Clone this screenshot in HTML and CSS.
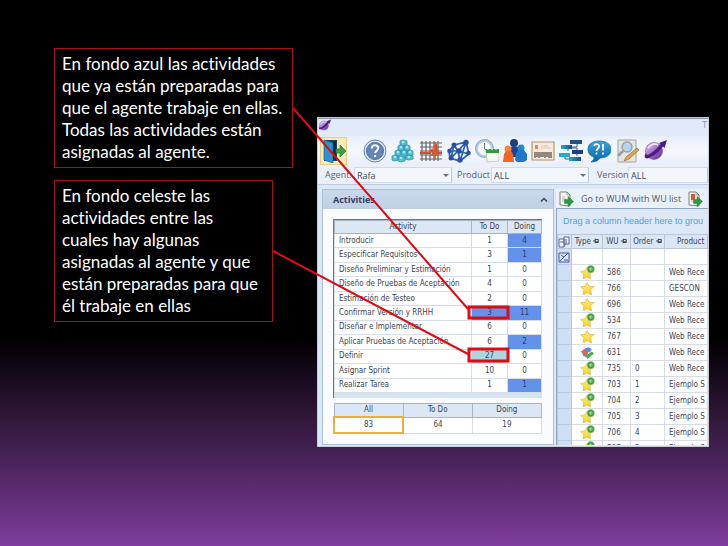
FILE: index.html
```html
<!DOCTYPE html>
<html lang="es">
<head>
<meta charset="utf-8">
<meta name="viewport" content="width=device-width, initial-scale=1">
<title>Actividades del agente</title>
<link rel="stylesheet" href="styles.css">
</head>
<body>
<svg class="defs" aria-hidden="true">
  <defs>
    <linearGradient id="gold" x1="0" y1="0" x2="0" y2="1"><stop offset="0" stop-color="#fff27a"/><stop offset="1" stop-color="#f5cf2c"/></linearGradient>
    <linearGradient id="violet" x1="0" y1="0" x2="1" y2="1"><stop offset="0" stop-color="#e6d4f2"/><stop offset=".5" stop-color="#a070c8"/><stop offset="1" stop-color="#54208a"/></linearGradient>
    <linearGradient id="sea" x1="0" y1="0" x2="0" y2="1"><stop offset="0" stop-color="#38a6da"/><stop offset="1" stop-color="#0a62a4"/></linearGradient>
    <linearGradient id="teal" x1="0" y1="0" x2="1" y2="0"><stop offset="0" stop-color="#1cb4c8"/><stop offset="1" stop-color="#1c4494"/></linearGradient>
  </defs>
  <symbol id="star" viewBox="0 0 14 14"><path d="M6 1.500l1.600 3.400 4.600.3-3.100 3 .9 4.600L6 10.900l-3.600 1.900.5-4.500L0 5.400l4.300-.5z" fill="url(#gold)" stroke="#e6bc3a" stroke-width=".8" transform="translate(.8 0)"/></symbol>
  <symbol id="star-plus" viewBox="0 0 14 14"><use href="#star" width="13" height="13" y="1"/><circle cx="10" cy="3.800" r="3.400" fill="#3f9c35" stroke="#8fcc80" stroke-width=".5"/><path d="M10 2v3.600M8.200 3.800h3.600" stroke="#a8dc9c" stroke-width="1"/></symbol>
  <symbol id="gem" viewBox="0 0 14 14"><path d="M1 6l4-3 3 2-1 4-3 1z" fill="#e2604c"/><path d="M5 3l3-1 3 2-2 3-3-1z" fill="#5c8ede"/><path d="M2 7l3 1 2 4-4-2z" fill="#7c7ed0"/><path d="M5 9l2 4 6-5-2-2-4 3z" fill="#46ac4e"/></symbol>
  <symbol id="planet" viewBox="0 0 24 24"><circle cx="11" cy="12" r="8.500" fill="url(#violet)" stroke="#7a4ca8" stroke-width=".6"/><path d="M3.500 13C0 18 2 21 7 18.500c6-3 10-7 13-11l1.500 1.500L24 1l-8 3 1.500 1.300C13 10.500 9 14.500 5 15.800 3 16.200 2.800 15 3.500 13z" fill="#4d1c82"/><path d="M5 9q5-6 10-3" stroke="#f3e9fa" stroke-width="1.500" fill="none"/></symbol>
  <symbol id="doc-go" viewBox="0 0 16 16"><path d="M2 1h7l3 3v11l-10-1z" fill="#fafbf8" stroke="#7b8074"/><path d="M9 1v3h3" fill="none" stroke="#7b8074" stroke-width=".7"/><path d="M4 6h3M4 8h4M4 10h3" stroke="#a3a89e" stroke-width=".8"/><path d="M6.500 8.500H10V5.500l5.500 5-5.500 5v-3H6.500z" fill="#2b9a43" stroke="#1c7630" stroke-width=".5"/></symbol>
  <symbol id="pin" viewBox="0 0 8 8"><path d="M0 4h3M3 1v6M3 2h4v4H3M3 5h4" fill="none" stroke="#333845" stroke-width="1.200"/></symbol>
</svg>

<main class="slide">
  <div class="notes">
    <p class="note">En fondo azul las actividades<br>que ya están preparadas para<br>que el agente trabaje en ellas.<br>Todas las actividades están<br>asignadas al agente.</p>
    <p class="note note-short">En fondo celeste las<br>actividades entre las<br>cuales hay algunas<br>asignadas al agente y que<br>están preparadas para que<br>él trabaje en ellas</p>
  </div>

  <section class="window" aria-label="Agent">
    <header class="titlebar">
      <svg class="app-icon"><use href="#planet"/></svg>
      <span>T</span>
    </header>

    <nav class="toolbar">
      <button class="tool tool-exit" aria-label="Exit"><svg viewBox="0 0 24 24"><path d="M2 1h13v21H2z" fill="#12435f"/><path d="M2 1l9 3v20l-9-3z" fill="#2b94cc" stroke="#0d628f" stroke-width=".7"/><path d="M11 2h3v19h-3z" fill="#0b2c42"/><path d="M14 10h4V6l6 6-6 6v-4h-4z" fill="#37a24b" stroke="#1e7a36" stroke-width=".7"/></svg></button>
      <button class="tool" aria-label="Help"><svg viewBox="0 0 24 24"><circle cx="12" cy="12" r="11" fill="#dce5f0" stroke="#6784ad"/><circle cx="12" cy="12" r="8.500" fill="#6387b8" stroke="#4e70a0"/><path d="M8.800 9.500c0-4.500 6.700-4.300 6.500-.3-.1 2.200-3.100 2.300-3.100 4.800M12.100 16v2" fill="none" stroke="#fff" stroke-width="2"/></svg></button>
      <button class="tool" aria-label="Packages"><svg viewBox="0 0 24 24"><g fill="#55bfd2" stroke="#2f93ac" stroke-width=".8"><path d="M9 2l3-1 4 1v4l-4 1-3-1zM7 7l3-1 3 1v4l-3 1-3-1zM13 7l3-1 3 1v4l-3 1-3-1zM4 12l3-1 3 1v4l-3 1-3-1zM10 12l3-1 3 1v4l-3 1-3-1zM16 12l3-1 3 1v4l-3 1-3-1zM1 17l3-1 3 1v4l-3 1-3-1zM7 18l3-1 4 1v4l-4 1-3-1zM14 17l4-1 4 1v3l-4 1-4-1z"/></g><g fill="#a5e6ef"><circle cx="12" cy="3" r="1.300"/><circle cx="10" cy="8" r="1.300"/><circle cx="16" cy="8" r="1.300"/><circle cx="7" cy="13" r="1.300"/><circle cx="13" cy="13" r="1.300"/><circle cx="19" cy="13" r="1.300"/><circle cx="4" cy="18" r="1.300"/><circle cx="10" cy="19" r="1.300"/><circle cx="18" cy="18" r="1.300"/></g></svg></button>
      <button class="tool" aria-label="Plan"><svg viewBox="0 0 24 24"><path d="M3 2v20M7 2v20M11 2v20M15 2v20M19 2v20M1 4h22M1 8h22M1 12h22M1 16h22M1 20h22" stroke="#6b6262" stroke-width="1.200"/><path d="M1 14h10l2-3 2 6 2-12 1 9h5" stroke="#d1512b" stroke-width="2" fill="none"/><path d="M16 3v18M12 16h8" stroke="#cf5c37" stroke-width="1.500"/></svg></button>
      <button class="tool" aria-label="Network"><svg viewBox="0 0 24 24"><path d="M7 6l12-3 3 12-9 7-10-3-1-7zM7 6l4 6 8-9M2 12h9l11 3M4 19l7-7 2 10M7 6L4 19M19 3l-6 19" fill="none" stroke="#2f5fb2" stroke-width="1.700"/><g fill="#2551aa"><circle cx="7" cy="6" r="2.500"/><circle cx="19" cy="3.500" r="2.700"/><circle cx="21.500" cy="14" r="2.300"/><circle cx="13" cy="21" r="2.700"/><circle cx="4" cy="19" r="2.500"/><circle cx="2.500" cy="12" r="2.300"/><circle cx="12" cy="12" r="2.700"/></g></svg></button>
      <button class="tool" aria-label="Schedule"><svg viewBox="0 0 24 24"><circle cx="9.500" cy="9.500" r="9" fill="#b4cce8" stroke="#8ca7c8"/><circle cx="9.500" cy="9.500" r="6.500" fill="#f8fbff"/><path d="M9.500 4v6l5 2" stroke="#62758c" fill="none"/><path d="M11 11h13v11l-12 1z" fill="#f5f8f2" stroke="#b0bdab" stroke-width=".7"/><path d="M11 10h13v4H11z" fill="#2f993c"/><path d="M13 9v2M17 9v2M21 9v2" stroke="#e6f3e5" stroke-width="1.200"/></svg></button>
      <button class="tool" aria-label="Team"><svg viewBox="0 0 24 24"><circle cx="11" cy="4" r="4" fill="#1a3f87"/><path d="M6 18V9l4-2 6 1 2 3v7z" fill="#1b458f"/><circle cx="18" cy="9" r="3.500" fill="#2587d3"/><path d="M12 21l1-7 3-3h5l3 4v6l-3 2h-7z" fill="#1c78c8"/><circle cx="5" cy="10" r="3.500" fill="#f4863c"/><path d="M0 23l1-8 2-3h5l2 3 1 8z" fill="#ee6822"/></svg></button>
      <button class="tool" aria-label="Card"><svg viewBox="0 0 24 24"><path d="M1 3h22v18H1z" fill="#f7eadc" stroke="#b49674" stroke-width="1.200"/><path d="M4 6h3v4H4z" fill="#ef8b32"/><path d="M10 7h7M10 9h10" stroke="#d8c6b5"/><path d="M4 13v6M6 13v5M8 13v6M10 13v5M12 13v5M14 13v6M16 13v5M18 13v6M20 13v6" stroke="#4f4742" stroke-width="1.200"/></svg></button>
      <button class="tool" aria-label="Workflow"><svg viewBox="0 0 24 24"><path d="M18 4v4H9v4M9 9h9v8M6 14v6h8" fill="none" stroke="#386598"/><path d="M11 1h12v4H11z" fill="#22508f"/><path d="M2 6h11v4H2z" fill="url(#teal)"/><path d="M13 11h11v4H13z" fill="#203b87"/><path d="M0 14h11v4H0z" fill="#21b0c7"/><path d="M10 18h12v4H10z" fill="url(#teal)"/></svg></button>
      <button class="tool" aria-label="Questions"><svg viewBox="0 0 24 24"><path d="M12 2c7 0 12 3 12 8.500S19 19 13 19c-2 3-5 4-9 4 2-1 3-3 3-5-4-1-6-4-6-8C1 5 6 2 12 2z" fill="url(#sea)" stroke="#0e639b" stroke-width=".7"/><path d="M7 7c1-3 6-2 5 1-.5 1.500-2.500 2-2.500 4M9.500 13.500v2M16 5v6.500M16 13.500v2" fill="none" stroke="#fff" stroke-width="1.700"/></svg></button>
      <button class="tool" aria-label="Review"><svg viewBox="0 0 24 24"><path d="M3 1h18v22H3z" fill="#e6e5e1" stroke="#a3a29f"/><circle cx="12" cy="8" r="5" fill="#b9d4ec" stroke="#95a3b4" stroke-width="1.500"/><path d="M8 12l-5 5" stroke="#929cab" stroke-width="2.500"/><path d="M22 9l2 2-10 9-5 2 2-4z" fill="#dca553" stroke="#97713e" stroke-width=".7"/></svg></button>
      <button class="tool" aria-label="Explore"><svg><use href="#planet"/></svg></button>
    </nav>

    <form class="filters">
      <label for="agent">Agent:</label>
      <span class="combo"><select id="agent"><option>Rafa</option></select></span>
      <label for="product">Product</label>
      <span class="combo"><select id="product"><option>ALL</option></select></span>
      <label class="version-label" for="version">Version</label>
      <span class="combo combo-last"><select id="version"><option>ALL</option></select></span>
    </form>

    <div class="workspace">
      <section class="activities">
        <h2 class="panel-head">Activities <svg class="chevron" viewBox="0 0 8 8"><path d="M1 5.500l3-3 3 3" fill="none" stroke="#35445c" stroke-width="1.500"/></svg></h2>
        <div class="panel-body">
          <div class="activity-box">
            <table class="activity-table">
              <colgroup><col><col class="col-todo"><col class="col-doing"></colgroup>
              <thead><tr><th>Activity</th><th>To Do</th><th>Doing</th></tr></thead>
              <tbody>
                <tr><td>Introducir</td><td>1</td><td class="blue">4</td></tr>
                <tr><td>Especificar Requisitos</td><td>3</td><td class="blue">1</td></tr>
                <tr><td>Diseño Preliminar y Estimación</td><td>1</td><td>0</td></tr>
                <tr><td>Diseño de Pruebas de Aceptación</td><td>4</td><td>0</td></tr>
                <tr><td>Estimación de Testeo</td><td>2</td><td>0</td></tr>
                <tr><td>Confirmar Versión y RRHH</td><td class="blue">3</td><td class="blue">11</td></tr>
                <tr><td>Diseñar e Implementar</td><td>6</td><td>0</td></tr>
                <tr><td>Aplicar Pruebas de Aceptación</td><td>6</td><td class="blue">2</td></tr>
                <tr><td>Definir</td><td class="sky">27</td><td>0</td></tr>
                <tr><td>Asignar Sprint</td><td>10</td><td>0</td></tr>
                <tr><td>Realizar Tarea</td><td>1</td><td class="blue">1</td></tr>
              </tbody>
            </table>
          </div>
          <table class="totals">
            <thead><tr><th>All</th><th>To Do</th><th>Doing</th></tr></thead>
            <tbody><tr><td class="selected">83</td><td>64</td><td>19</td></tr></tbody>
          </table>
        </div>
      </section>

      <section class="units">
        <div class="unit-actions">
          <button class="go"><svg class="doc"><use href="#doc-go"/></svg><span>Go to WUM with WU list</span></button>
          <button class="go" aria-label="Go to WU"><svg class="doc" viewBox="0 0 16 16"><use href="#doc-go"/><path d="M4 3h4v6H4z" fill="#dd5130"/></svg></button>
        </div>
        <div class="unit-grid">
          <p class="group-hint">Drag a column header here to grou</p>
          <table class="unit-table">
            <colgroup><col class="c-handle"><col class="c-type"><col class="c-wu"><col class="c-order"><col></colgroup>
            <thead>
              <tr><th><svg class="mini" viewBox="0 0 12 12"><path d="M1 3h5v8H1zM6 1h5v7H6zM2 6h3M8 3v5l-2 2" fill="#eef2fc" stroke="#5d6485"/></svg></th><th>Type <svg class="pin"><use href="#pin"/></svg></th><th>WU <svg class="pin"><use href="#pin"/></svg></th><th>Order <svg class="pin"><use href="#pin"/></svg></th><th class="product">Product</th></tr>
            </thead>
            <tbody>
              <tr><td><svg class="mini" viewBox="0 0 12 12"><path d="M1 2h10v9H1z" fill="#dbe5fa" stroke="#4a5599"/><path d="M2 10l8-8M3 4l3 2M6 9h4" stroke="#4a5599"/></svg></td><td></td><td></td><td></td><td></td></tr>
              <tr><td></td><td><svg class="mark"><use href="#star-plus"/></svg></td><td>586</td><td></td><td>Web Rece</td></tr>
              <tr><td></td><td><svg class="mark"><use href="#star"/></svg></td><td>766</td><td></td><td>GESCON</td></tr>
              <tr><td></td><td><svg class="mark"><use href="#star"/></svg></td><td>696</td><td></td><td>Web Rece</td></tr>
              <tr><td></td><td><svg class="mark"><use href="#star-plus"/></svg></td><td>534</td><td></td><td>Web Rece</td></tr>
              <tr><td></td><td><svg class="mark"><use href="#star"/></svg></td><td>767</td><td></td><td>Web Rece</td></tr>
              <tr><td></td><td><svg class="mark"><use href="#gem"/></svg></td><td>631</td><td></td><td>Web Rece</td></tr>
              <tr><td></td><td><svg class="mark"><use href="#star-plus"/></svg></td><td>735</td><td>0</td><td>Web Rece</td></tr>
              <tr><td></td><td><svg class="mark"><use href="#star-plus"/></svg></td><td>703</td><td>1</td><td>Ejemplo S</td></tr>
              <tr><td></td><td><svg class="mark"><use href="#star-plus"/></svg></td><td>704</td><td>2</td><td>Ejemplo S</td></tr>
              <tr><td></td><td><svg class="mark"><use href="#star-plus"/></svg></td><td>705</td><td>3</td><td>Ejemplo S</td></tr>
              <tr><td></td><td><svg class="mark"><use href="#star-plus"/></svg></td><td>706</td><td>4</td><td>Ejemplo S</td></tr>
              <tr><td></td><td><svg class="mark"><use href="#star-plus"/></svg></td><td>707</td><td>5</td><td>Ejemplo S</td></tr>
            </tbody>
          </table>
        </div>
      </section>
    </div>
  </section>

  <!-- Callout lines from each note to the cell it explains -->
  <svg class="callouts" viewBox="0 0 520 370" aria-hidden="true">
    <g fill="none" stroke="#e00b12">
      <path d="M293 108L468 309M273 251L468 354" stroke-width="2"/>
      <path d="M469 307h39v11h-39zM469 349h39v12h-39z" stroke-width="3"/>
    </g>
  </svg>
</main>
</body>
</html>
```

FILE: styles.css
```css
* {
  box-sizing: border-box;
}

body {
  margin: 0;
  background: #000;
}

.defs {
  position: absolute;
  width: 0;
  height: 0;
}

.slide {
  position: relative;
  display: flex;
  align-items: flex-start;
  gap: 24px;
  min-height: 100vh;
  padding: 48px 19px 48px 54px;
  background: linear-gradient(#000 62%, #0d0610 66%, #41204f 82%, #803c9e);
}

/* Notes */
.notes {
  display: flex;
  flex: none;
  flex-direction: column;
  gap: 12px;
  width: 239px;
}

.note {
  margin: 0;
  padding: 4px 7px;
  border: 1px solid #a81216;
  color: #fff;
  font: 17px/22px Lato, sans-serif;
  font-variant-ligatures: none;
  white-space: nowrap;
}

.note-short {
  width: 219px;
}

.callouts {
  position: absolute;
  top: 0;
  left: 0;
  width: 520px;
  height: 370px;
  pointer-events: none;
}

/* Application window */
.window {
  flex: 1;
  min-width: 0;
  margin-top: 69px;
  overflow: hidden;
  border: 1px solid #c9ccd2;
  background: #dde8f6;
  color: #3c4350;
  font: 8px/14px "DejaVu Sans Condensed", "Liberation Sans", sans-serif;
}

.titlebar {
  display: flex;
  justify-content: space-between;
  height: 18px;
  padding-right: 1px;
  border-top: 1px solid #8894a8;
  background: #e1eaf8;
  color: #8b94a3;
}

.app-icon {
  width: 13px;
  height: 13px;
}

.toolbar {
  display: flex;
  align-items: center;
  height: 29px;
  padding-left: 2px;
  background: linear-gradient(#e9f0fb, #f5f8fd 50%, #e9effa);
}

.tool {
  display: flex;
  flex: none;
  align-items: center;
  justify-content: center;
  width: 28px;
  height: 28px;
  padding: 0;
  border: 0;
  background: none;
}

.tool svg {
  width: 24px;
  height: 24px;
}

.tool-exit {
  width: 27px;
  margin-right: 14px;
  border: 1px solid #e6cd84;
  background: #faebb3;
}

.filters {
  display: flex;
  align-items: center;
  height: 20px;
  padding-left: 7px;
  border-bottom: 1px solid #b9cbe2;
  background: #e9f0fa;
  color: #5a6273;
  font: 9px/16px "Open Sans", sans-serif;
}

.filters label {
  flex: none;
  width: 34px;
  white-space: nowrap;
}

.filters label:first-child {
  width: 29px;
}

.filters .version-label {
  width: 31px;
  margin-left: 3px;
}

.combo {
  position: relative;
  flex: none;
  width: 98px;
  margin-right: 5px;
}

.combo::after {
  content: "";
  position: absolute;
  top: 7px;
  right: 3px;
  border: 3px solid transparent;
  border-top-color: #697386;
}

.combo-last {
  flex: 1;
  margin-right: 0;
}

.combo-last::after {
  display: none;
}

.combo select {
  display: block;
  width: 100%;
  height: 16px;
  padding: 0 2px;
  border: 1px solid #cfdbeb;
  border-right-color: #b9cade;
  border-radius: 0;
  appearance: none;
  background: #f3f7fd;
  color: #3d4452;
  font: inherit;
}

.workspace {
  display: flex;
  gap: 2px;
  padding: 4px 0 1px 4px;
}

/* Activities panel */
.activities {
  flex: none;
  width: 232px;
  border: 1px solid #a9c0dc;
}

.panel-head {
  display: flex;
  align-items: center;
  justify-content: space-between;
  height: 19px;
  margin: 0;
  padding: 0 5px 0 10px;
  background: linear-gradient(#cad9ec, #bfd0e6);
  color: #2b4164;
  font: bold 9px/16px "Open Sans", sans-serif;
}

.chevron {
  width: 8px;
  height: 8px;
}

.panel-body {
  display: flex;
  flex-direction: column;
  gap: 5px;
  padding: 10px 11px 10px 10px;
  background: #f9fbfe;
}

.activity-box {
  padding-bottom: 5px;
  border-top: 1px solid #6f7682;
  border-left: 1px solid #6f7682;
  background: #d5e2f1;
}

table {
  width: 100%;
  border-collapse: collapse;
  table-layout: fixed;
  background: #fff;
}

th,
td {
  padding: 0;
  border: 1px solid #d7dde6;
  font-weight: normal;
  line-height: 12px;
  text-align: center;
  white-space: nowrap;
}

.activity-table {
  height: 173px;
}

.col-todo {
  width: 36px;
}

.col-doing {
  width: 34px;
}

.activity-table th,
.totals th {
  border-color: #a8b4c5;
  background: #dbe7f5;
}

.activity-table td:first-child {
  padding-left: 4px;
  text-align: left;
}

.activity-table .blue {
  background: #6492ea;
  color: #263a68;
}

.activity-table .sky {
  background: #acd6df;
}

.totals {
  height: 31px;
  border-top: 1px solid #6f7682;
  border-left: 1px solid #6f7682;
}

.totals .selected {
  border: 2px solid #efad3c;
}

/* Work unit list: takes its height from the activities panel beside it */
.units {
  display: flex;
  flex: 1;
  flex-direction: column;
  min-width: 0;
  overflow: hidden;
  contain: size;
}

.unit-actions {
  display: flex;
  flex: none;
  gap: 6px;
  height: 19px;
  padding-left: 2px;
  background: #e9f0fa;
}

.go {
  display: flex;
  flex: none;
  align-items: center;
  gap: 7px;
  padding: 0;
  border: 0;
  background: none;
  color: #4b556a;
  font: 9px/16px "Open Sans", sans-serif;
}

.doc {
  width: 16px;
  height: 16px;
}

.unit-grid {
  flex: 1;
  border-top: 1px solid #8fa5c2;
  border-left: 1px solid #8fa5c2;
}

.group-hint {
  margin: 0;
  padding: 0 6px;
  color: #4f9fdc;
  font: 9px/25px "Liberation Sans", sans-serif;
  white-space: nowrap;
}

.unit-table td,
.unit-table th {
  height: 16px;
  overflow: hidden;
}

.unit-table th {
  height: 14px;
  border-color: #b7c6da;
  background: #dbe6f5;
}

.unit-table td:first-child {
  border-color: #b7c9e1;
  background: #cfdff3;
}

.unit-table td:nth-child(n + 3) {
  padding-left: 4px;
  text-align: left;
}

.unit-table .product {
  padding-left: 12px;
  text-align: left;
}

.c-handle {
  width: 14px;
}

.c-type {
  width: 31px;
}

.c-wu {
  width: 28px;
}

.c-order {
  width: 34px;
}

.mini {
  display: block;
  width: 12px;
  height: 12px;
}

.pin {
  width: 6px;
  height: 6px;
}

.mark {
  display: block;
  width: 15px;
  height: 15px;
  margin: 0 auto;
}
```
